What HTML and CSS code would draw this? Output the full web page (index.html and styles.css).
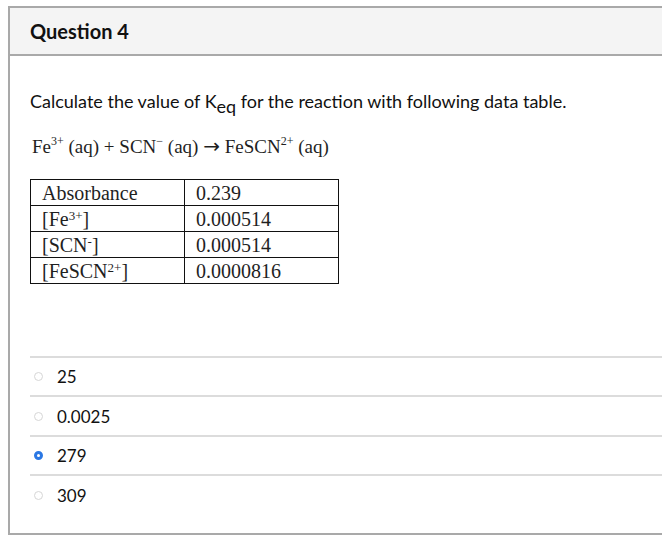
FILE: index.html
```html
<!DOCTYPE html>
<html>
<head>
<meta charset="utf-8">
<link rel="stylesheet" href="styles.css">
</head>
<body>
<div class="question">
  <div class="q-header">Question 4</div>
  <div class="q-body">
    <p class="prompt">Calculate the value of K<span class="sub">eq</span> for the reaction with following data table.</p>
    <p class="equation">Fe<sup>3+</sup> (aq) + SCN<sup>&minus;</sup> (aq) <span class="arrow">&rarr;</span> FeSCN<sup>2+</sup> (aq)</p>
    <table class="data">
      <tr><td>Absorbance</td><td>0.239</td></tr>
      <tr><td>[Fe<sup class="tsup">3+</sup>]</td><td>0.000514</td></tr>
      <tr><td>[SCN<sup class="tsup">-</sup>]</td><td>0.000514</td></tr>
      <tr><td>[FeSCN<sup class="tsup">2+</sup>]</td><td>0.0000816</td></tr>
    </table>
    <div class="answers">
      <div class="answer"><span class="radio"></span><span class="label">25</span></div>
      <div class="answer"><span class="radio"></span><span class="label">0.0025</span></div>
      <div class="answer"><span class="radio checked"></span><span class="label">279</span></div>
      <div class="answer last"><span class="radio"></span><span class="label">309</span></div>
    </div>
  </div>
</div>
</body>
</html>
```
FILE: styles.css
```css
html, body {
  overflow: hidden;
}
body {
  margin: 6px 0 0 8px;
  font-family: Lato, "Open Sans", sans-serif;
  color: #1f1f1f;
  background: #fff;
}
.question {
  width: 700px;
  border: 2px solid #a9a9a9;
  background: #fff;
}
.q-header {
  height: 46px;
  background: #f4f4f4;
  border-bottom: 2px solid #a9a9a9;
  display: flex;
  align-items: center;
  padding-left: 20px;
  font-size: 20px;
  font-weight: 700;
  color: #111;
}
.q-body {
  padding: 0 0 0 20px;
}
.prompt {
  margin: 33px 0 0 0;
  font-size: 18px;
  line-height: 24px;
  color: #111;
}
.sub {
  display: inline-block;
  font-size: 1em;
  transform: translateY(5px);
}
.equation {
  margin: 22px 0 0 2px;
  font-family: "Liberation Serif", "Times New Roman", serif;
  font-size: 19px;
  line-height: 24px;
}
.equation sup {
  font-size: 12px;
  vertical-align: 8px;
  line-height: 0;
}
.arrow {
  font-family: "DejaVu Sans", sans-serif;
  font-size: 20px;
  line-height: 0;
}
.data {
  margin-top: 20px;
  border-collapse: collapse;
  font-family: "Liberation Serif", "Times New Roman", serif;
  font-size: 20px;
}
.data td {
  border: 1px solid #111;
  width: 142px;
  height: 25px;
  padding: 0 0 0 11px;
  line-height: 22px;
}
.data td + td {
  border-left: 1px solid #666;
}
.tsup {
  font-size: 13px;
  vertical-align: 6px;
  line-height: 0;
}
.answers {
  margin-top: 72px;
  padding-bottom: 19px;
}
.answer {
  border-top: 2px solid #dcdcdc;
  height: 37.4px;
  display: flex;
  align-items: center;
  padding-left: 4px;
  font-size: 17px;
}
.answer.last {
  height: 38px;
}
.radio {
  width: 7px;
  height: 7px;
  border-radius: 50%;
  border: 1px solid #d6d6d6;
  background: #fff;
  margin-right: 14px;
  flex: none;
}
.radio.checked {
  width: 3px;
  height: 3px;
  border: 3px solid #2b78e4;
}
.label {
  color: #111;
}
```
